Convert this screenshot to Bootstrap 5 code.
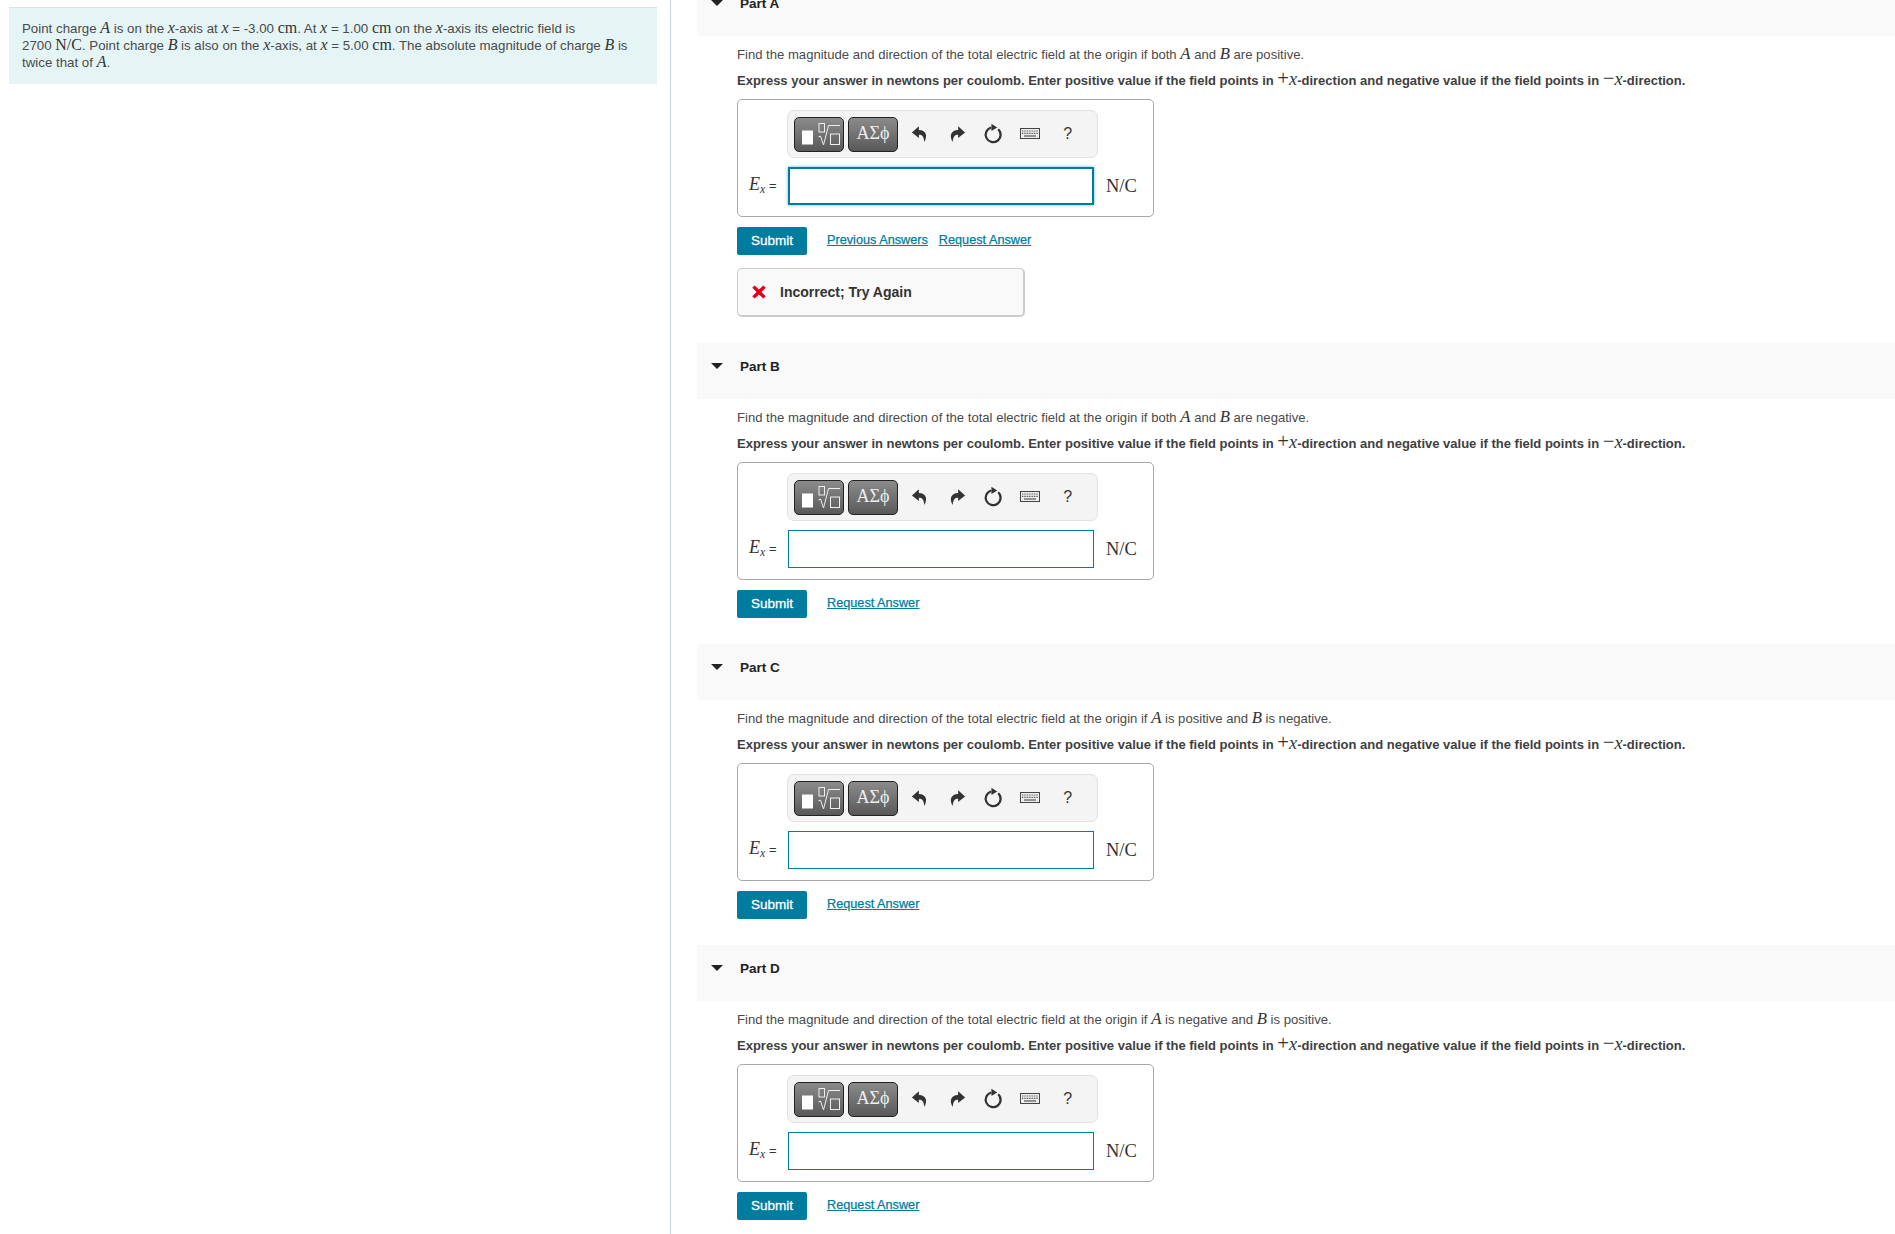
<!DOCTYPE html>
<html lang="en">
<head>
  <meta charset="UTF-8" />
  <meta name="viewport" content="width=device-width, initial-scale=1.0"/>
  <title>Point charge problem</title>
  <link href="https://cdn.jsdelivr.net/npm/bootstrap@5.3.2/dist/css/bootstrap.min.css" rel="stylesheet">
  <style>
    html, body {
      height: 100%;
      overflow: hidden;
    }

    body {
      background-color: #fff;
      font-family: "Liberation Sans", Arial, sans-serif;
      font-size: 13.1px;
      color: #4a4a4a;
    }

    .mi, .mn {
      font-family: "Liberation Serif", "Times New Roman", serif;
      font-size: 1.28em;
      line-height: 0;
      color: #333;
    }

    .mi { font-style: italic; }
    .nowrap { white-space: nowrap; }

    .left-col {
      width: 671px;
      height: 1234px;
      flex: none;
      padding: 7px 13px 0 9px;
      border-right: 1px solid #c3d3de;
    }

    .intro {
      background-color: #e5f5f6;
      border-top: 1px solid #d5e5e6;
      padding: 12px 13px;
      font-size: 13.3px;
      line-height: 17px;
      height: 77px;
    }

    .intro .mi, .intro .mn { font-size: 1.2em; }

    .right-col {
      margin-top: -20px;
      padding-left: 26px;
    }

    .part-head {
      height: 56px;
      background-color: #f9f9f9;
      color: #222;
      font-weight: bold;
      font-size: 13.5px;
      padding: 14px 0 0 14px;
      line-height: 20px;
    }

    .caret-down {
      width: 0;
      height: 0;
      border-left: 6px solid transparent;
      border-right: 6px solid transparent;
      border-top: 6px solid #222;
      margin: 6px 17px 0 0;
    }

    .part-body {
      padding: 9px 0 26px 40px;
      line-height: 20px;
    }

    .part-body p { margin: 0 0 6px 0; height: 20px; }
    .part-body p.instr { font-size: 13px; font-weight: bold; margin-bottom: 8px; color: #404040; }
    .part-body p.instr .mi, .part-body p.instr .mn { font-weight: normal; }
    .part-body p.instr .mn { font-size: 1.6em; }
    .part-body p.instr .mi { font-size: 1.4em; }

    .answer-box {
      width: 417px;
      height: 118px;
      border: 1px solid #a9a9a9;
      border-radius: 5px;
      padding: 10px 0 0 11px;
    }

    .toolbar {
      width: 311px;
      height: 48px;
      margin-left: 38px;
      background-color: #f4f4f4;
      border: 1px solid #e2e2e2;
      border-radius: 7px;
      padding: 6px 0 0 6px;
    }

    .tool-btn {
      width: 50px;
      height: 35px;
      padding: 0;
      border: 1px solid #222;
      border-radius: 5px;
      background: linear-gradient(#8b8b8b, #595959);
      color: #eee;
      font-family: "Liberation Serif", "Times New Roman", serif;
      font-size: 18px;
      line-height: 31px;
      text-align: center;
      margin-right: 4px;
    }

    .tool-btn + .tool-btn { margin-right: 1px; }

    .tool-icon {
      width: 37.5px;
      height: 35px;
      color: #333;
      text-align: center;
      line-height: 33px;
      font-family: "Liberation Sans", Arial, sans-serif;
      font-size: 16px;
    }

    .tool-icon svg { display: block; margin: auto; height: 33px; }

    .answer-row {
      margin-top: 9px;
      height: 38px;
    }

    .ans-label {
      width: 39px;
      flex: none;
      font-size: 13px;
      color: #333;
    }

    .ans-label .mi { font-size: 18px; }
    .ans-label sub { font-size: 11.5px; bottom: -.3em; margin-right: 4px; font-family: "Liberation Serif", serif; font-style: italic; }

    .ans-input.form-control {
      width: 306px;
      height: 38px;
      flex: none;
      border: 1px solid #007c9e;
      border-radius: 0;
      box-shadow: none;
    }

    .ans-input.is-focused {
      border-width: 2px;
      box-shadow: 0 0 3px rgba(0, 124, 158, .6);
    }

    .unit {
      margin-left: 12px;
      font-family: "Liberation Serif", "Times New Roman", serif;
      font-size: 18.5px;
      color: #333;
    }

    .action-row {
      margin-top: 10px;
      height: 28px;
    }

    .btn-submit {
      width: 70px;
      height: 28px;
      padding: 0;
      background-color: #007c9e;
      border: none;
      border-radius: 2px;
      color: #fff;
      font-size: 13.5px;
      line-height: 28px;
      -webkit-text-stroke: .3px #fff;
    }

    .action-row a {
      color: #007c9e;
      font-size: 12.7px;
      -webkit-text-stroke: .25px #007c9e;
      margin-left: 11px;
      margin-top: -2px;
    }

    .action-row a:first-of-type { margin-left: 20px; }

    .feedback {
      width: 288px;
      height: 49px;
      margin-top: 13px;
      padding-left: 14px;
      background-color: #f9f9f9;
      border: 1px solid #ccc;
      border-bottom-width: 2px;
      border-right-width: 2px;
      border-radius: 5px;
      color: #333;
      font-size: 14px;
      font-weight: bold;
    }

    .feedback svg { margin-right: 14px; }
  </style>
</head>
<body>

<svg width="0" height="0" class="d-none">
  <symbol id="ic-undo" viewBox="0 0 16 16"><path fill="#333" d="M7 1.5 L.8 7 L7 12 V9.2 C10 9.2 11.4 10.6 11.8 15.5 C14.8 10.5 14 5 7 4.8 Z"/></symbol>
  <symbol id="ic-redo" viewBox="0 0 16 16"><path fill="#333" d="M9 1.5 L15.2 7 L9 12 V9.2 C6 9.2 4.6 10.6 4.2 15.5 C1.2 10.5 2 5 9 4.8 Z"/></symbol>
  <symbol id="ic-reset" viewBox="0 0 18 18">
    <path fill="none" stroke="#333" stroke-width="2" d="M13.7 5.2 A6.7 6.7 0 1 1 7.5 3.6"/>
    <path fill="#333" d="M7.6 .2 L12.8 3.6 L7.6 6.8 Z"/>
  </symbol>
  <symbol id="ic-keys" viewBox="0 0 20 11">
    <rect x=".5" y=".5" width="19" height="10" fill="#eee" stroke="#444"/>
    <path stroke="#555" stroke-width="1.2" stroke-dasharray="1 .7" d="M2 3 H18 M2 5.4 H18"/>
    <path stroke="#555" stroke-width="1.2" d="M4 8 H16"/>
  </symbol>
  <symbol id="ic-templates" viewBox="0 0 48 33">
    <rect x="7" y="12.5" width="11" height="14" fill="#fff"/>
    <rect x="24" y="5.5" width="5.5" height="8.5" fill="none" stroke="#eee"/>
    <path fill="none" stroke="#eee" d="M23.5 19 L25.5 18 L28.5 27 L33.5 7.5 H45"/>
    <rect x="35.5" y="16" width="9" height="10.5" fill="none" stroke="#eee"/>
  </symbol>
</svg>

<div class="d-flex">
  <div class="left-col">
    <div class="intro">
      Point charge <span class="mi">A</span> is on the <span class="mi">x</span>-axis at <span class="mi">x</span> = -3.00 <span class="mn">cm</span>. At <span class="mi">x</span> = 1.00 <span class="mn">cm</span> on the <span class="mi">x</span>-axis its electric field is<br>
      2700 <span class="mn">N/C</span>. Point charge <span class="mi">B</span> is also on the <span class="mi">x</span>-axis, at <span class="mi">x</span> = 5.00 <span class="mn">cm</span>. The absolute magnitude of charge <span class="mi">B</span> is<br>
      twice that of <span class="mi">A</span>.
    </div>
  </div>

  <div class="right-col flex-grow-1">

    <section>
      <div class="part-head d-flex align-items-start"><span class="caret-down"></span>Part A</div>
      <div class="part-body">
        <p>Find the magnitude and direction of the total electric field at the origin if both <span class="mi">A</span> and <span class="mi">B</span> are positive.</p>
        <p class="instr">Express your answer in newtons per coulomb. Enter positive value if the field points in <span class="mn">+</span><span class="mi">x</span>-direction and negative value if the field points in <span class="mn">&minus;</span><span class="mi">x</span>-direction.</p>
        <div class="answer-box">
          <div class="toolbar d-flex">
            <div class="tool-btn"><svg width="48" height="33" viewBox="0 0 48 33"><use href="#ic-templates"/></svg></div>
            <div class="tool-btn">&Alpha;&Sigma;&#981;</div>
            <div class="tool-icon ps-1"><svg width="18" height="18"><use href="#ic-undo"/></svg></div>
            <div class="tool-icon ps-1"><svg width="18" height="18"><use href="#ic-redo"/></svg></div>
            <div class="tool-icon"><svg width="20" height="20"><use href="#ic-reset"/></svg></div>
            <div class="tool-icon"><svg width="20" height="11"><use href="#ic-keys"/></svg></div>
            <div class="tool-icon">?</div>
          </div>
          <div class="answer-row d-flex align-items-center">
            <div class="ans-label"><span class="mi">E</span><sub>x</sub>=</div>
            <input type="text" class="form-control ans-input is-focused">
            <div class="unit">N/C</div>
          </div>
        </div>
        <div class="action-row d-flex align-items-center">
          <button type="button" class="btn btn-submit">Submit</button>
          <a href="#">Previous Answers</a>
          <a href="#">Request Answer</a>
        </div>
        <div class="feedback d-flex align-items-center">
          <svg width="14" height="14" viewBox="0 0 14 14"><path fill="#e3001b" d="M2.6 .4 L7 4.6 L11.4 .4 L13.7 2.7 L9.4 7 L13.7 11.3 L11.4 13.6 L7 9.4 L2.6 13.6 L.3 11.3 L4.6 7 L.3 2.7 Z"/></svg>
          Incorrect; Try Again
        </div>
      </div>
    </section>

    <section>
      <div class="part-head d-flex align-items-start"><span class="caret-down"></span>Part B</div>
      <div class="part-body">
        <p>Find the magnitude and direction of the total electric field at the origin if both <span class="mi">A</span> and <span class="mi">B</span> are negative.</p>
        <p class="instr">Express your answer in newtons per coulomb. Enter positive value if the field points in <span class="mn">+</span><span class="mi">x</span>-direction and negative value if the field points in <span class="mn">&minus;</span><span class="mi">x</span>-direction.</p>
        <div class="answer-box">
          <div class="toolbar d-flex">
            <div class="tool-btn"><svg width="48" height="33" viewBox="0 0 48 33"><use href="#ic-templates"/></svg></div>
            <div class="tool-btn">&Alpha;&Sigma;&#981;</div>
            <div class="tool-icon ps-1"><svg width="18" height="18"><use href="#ic-undo"/></svg></div>
            <div class="tool-icon ps-1"><svg width="18" height="18"><use href="#ic-redo"/></svg></div>
            <div class="tool-icon"><svg width="20" height="20"><use href="#ic-reset"/></svg></div>
            <div class="tool-icon"><svg width="20" height="11"><use href="#ic-keys"/></svg></div>
            <div class="tool-icon">?</div>
          </div>
          <div class="answer-row d-flex align-items-center">
            <div class="ans-label"><span class="mi">E</span><sub>x</sub>=</div>
            <input type="text" class="form-control ans-input">
            <div class="unit">N/C</div>
          </div>
        </div>
        <div class="action-row d-flex align-items-center">
          <button type="button" class="btn btn-submit">Submit</button>
          <a href="#">Request Answer</a>
        </div>
      </div>
    </section>

    <section>
      <div class="part-head d-flex align-items-start"><span class="caret-down"></span>Part C</div>
      <div class="part-body">
        <p>Find the magnitude and direction of the total electric field at the origin if <span class="mi">A</span> is positive and <span class="mi">B</span> is negative.</p>
        <p class="instr">Express your answer in newtons per coulomb. Enter positive value if the field points in <span class="mn">+</span><span class="mi">x</span>-direction and negative value if the field points in <span class="mn">&minus;</span><span class="mi">x</span>-direction.</p>
        <div class="answer-box">
          <div class="toolbar d-flex">
            <div class="tool-btn"><svg width="48" height="33" viewBox="0 0 48 33"><use href="#ic-templates"/></svg></div>
            <div class="tool-btn">&Alpha;&Sigma;&#981;</div>
            <div class="tool-icon ps-1"><svg width="18" height="18"><use href="#ic-undo"/></svg></div>
            <div class="tool-icon ps-1"><svg width="18" height="18"><use href="#ic-redo"/></svg></div>
            <div class="tool-icon"><svg width="20" height="20"><use href="#ic-reset"/></svg></div>
            <div class="tool-icon"><svg width="20" height="11"><use href="#ic-keys"/></svg></div>
            <div class="tool-icon">?</div>
          </div>
          <div class="answer-row d-flex align-items-center">
            <div class="ans-label"><span class="mi">E</span><sub>x</sub>=</div>
            <input type="text" class="form-control ans-input">
            <div class="unit">N/C</div>
          </div>
        </div>
        <div class="action-row d-flex align-items-center">
          <button type="button" class="btn btn-submit">Submit</button>
          <a href="#">Request Answer</a>
        </div>
      </div>
    </section>

    <section>
      <div class="part-head d-flex align-items-start"><span class="caret-down"></span>Part D</div>
      <div class="part-body">
        <p>Find the magnitude and direction of the total electric field at the origin if <span class="mi">A</span> is negative and <span class="mi">B</span> is positive.</p>
        <p class="instr">Express your answer in newtons per coulomb. Enter positive value if the field points in <span class="mn">+</span><span class="mi">x</span>-direction and negative value if the field points in <span class="mn">&minus;</span><span class="mi">x</span>-direction.</p>
        <div class="answer-box">
          <div class="toolbar d-flex">
            <div class="tool-btn"><svg width="48" height="33" viewBox="0 0 48 33"><use href="#ic-templates"/></svg></div>
            <div class="tool-btn">&Alpha;&Sigma;&#981;</div>
            <div class="tool-icon ps-1"><svg width="18" height="18"><use href="#ic-undo"/></svg></div>
            <div class="tool-icon ps-1"><svg width="18" height="18"><use href="#ic-redo"/></svg></div>
            <div class="tool-icon"><svg width="20" height="20"><use href="#ic-reset"/></svg></div>
            <div class="tool-icon"><svg width="20" height="11"><use href="#ic-keys"/></svg></div>
            <div class="tool-icon">?</div>
          </div>
          <div class="answer-row d-flex align-items-center">
            <div class="ans-label"><span class="mi">E</span><sub>x</sub>=</div>
            <input type="text" class="form-control ans-input">
            <div class="unit">N/C</div>
          </div>
        </div>
        <div class="action-row d-flex align-items-center">
          <button type="button" class="btn btn-submit">Submit</button>
          <a href="#">Request Answer</a>
        </div>
      </div>
    </section>

  </div>
</div>

<script src="https://cdn.jsdelivr.net/npm/bootstrap@5.3.2/dist/js/bootstrap.bundle.min.js"></script>
</body>
</html>
